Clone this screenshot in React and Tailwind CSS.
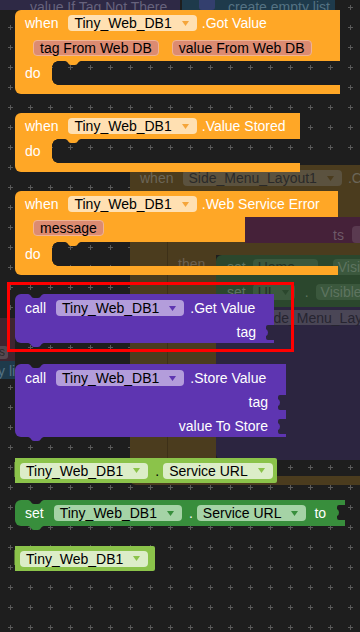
import React from "react";

function Arrow({ color, className = "ml-[10px]" }) {
  return (
    <svg width="7" height="5" viewBox="0 0 7 5" className={`shrink-0 ${className}`}>
      <path d="M0 0H7L3.5 5Z" fill={color} />
    </svg>
  );
}

function Drop({ bg, arrow, children, className = "" }) {
  return (
    <div className={`flex h-[16px] shrink-0 items-center rounded-[4px] pl-[6px] pr-[8px] text-black ${bg} ${className}`}>
      <span>{children}</span>
      <Arrow color={arrow} />
    </div>
  );
}

function Param({ children, className = "" }) {
  return (
    <div className={`flex h-[16px] shrink-0 items-center rounded-[4px] border border-[#f0b394] bg-[#dc8b71] px-[6px] text-black ${className}`}>
      {children}
    </div>
  );
}

// top dip of a statement block (shows the workspace behind)
function Dip({ fill = "#1e1e1e" }) {
  return (
    <svg className="absolute left-[13px] top-0" width="16" height="5" viewBox="0 0 16 5">
      <path d="M0 0C3 0 3 4 6 4H10C13 4 13 0 16 0Z" fill={fill} />
    </svg>
  );
}

function Bump({ fill }) {
  return (
    <svg className="absolute left-[13px] top-full" width="16" height="5" viewBox="0 0 16 5">
      <path d="M0 0C3 0 3 4 6 4H10C13 4 13 0 16 0Z" fill={fill} />
    </svg>
  );
}

function Socket({ fill, className = "" }) {
  return (
    <svg className={`absolute right-0 ${className}`} width="8" height="15" viewBox="0 0 8 15">
      <path d="M8 0H2Q0 0 0 2V4Q2 5 2 7.5Q2 10 0 11V13Q0 15 2 15H8Z" fill={fill} />
    </svg>
  );
}

function Plug({ fill }) {
  return (
    <svg className="absolute left-[-8px] top-[4px]" width="8" height="15" viewBox="0 0 8 15">
      <path d="M8.5 0H3Q1 0 1 2V4Q3 5 3 7.5Q3 10 1 11V13Q1 15 3 15H8.5Z" transform="translate(8 0) scale(-1 1) translate(-8 0)" fill={fill} />
    </svg>
  );
}

function DoRow() {
  return (
    <>
      <div className="flex h-[24px]">
        <div className="flex w-[37px] items-center bg-[#ffa726] pl-[10px]">do</div>
        <div className="relative flex-1">
          <div className="absolute left-0 top-0 h-[6px] w-[6px] bg-[radial-gradient(circle_at_100%_100%,transparent_5.5px,#ffa726_6px)]" />
          <div className="absolute bottom-0 left-0 h-[6px] w-[6px] bg-[radial-gradient(circle_at_100%_0%,transparent_5.5px,#ffa726_6px)]" />
          <svg className="absolute left-[13px] top-0" width="16" height="5" viewBox="0 0 16 5">
            <path d="M0 0C3 0 3 4 6 4H10C13 4 13 0 16 0Z" fill="#ffa726" />
          </svg>
        </div>
      </div>
      <div className="h-[9px] rounded-bl-[6px] bg-[#ffa726]" />
    </>
  );
}

function WhenRow({ event }) {
  return (
    <div className="flex h-[16px] items-center whitespace-nowrap">
      <span>when</span>
      <Drop bg="bg-[#ffe0b2]" arrow="#f5a53a" className="ml-[10px]">
        Tiny_Web_DB1
      </Drop>
      <span className="ml-[5px]">{event}</span>
    </div>
  );
}

function CallBlock({ className = "", method, inputs, socketBg }) {
  return (
    <div className={`relative rounded-l-[6px] bg-[#5e35b1] pb-[3px] pt-[6px] text-white ${className}`}>
      <Dip />
      <Bump fill="#5e35b1" />
      <div className="flex h-[16px] items-center pl-[10px]">
        <span>call</span>
        <Drop bg="bg-[#b39ddb]" arrow="#5e35b1" className="ml-[10px]">
          Tiny_Web_DB1
        </Drop>
        <span className="ml-[6px] whitespace-nowrap">{method}</span>
      </div>
      {inputs.map((name) => (
        <div key={name} className="relative mt-[8px] flex h-[16px] items-center justify-end pr-[18px]">
          {name}
          <Socket fill={socketBg} className="top-[1px]" />
        </div>
      ))}
    </div>
  );
}

function Dim({ className = "", children }) {
  return <div className={`absolute ${className}`}>{children}</div>;
}

export default function App() {
  return (
    <div className="relative h-[632px] w-[360px] overflow-hidden bg-[#1e1e1e] font-['Liberation_Sans',Arial,sans-serif] text-[14px] leading-none">
      {/* workspace grid */}
      <svg className="absolute left-0 top-0" width="360" height="632">
        <defs>
          <pattern id="grid" x="0" y="-3" width="20" height="20" patternUnits="userSpaceOnUse">
            <path d="M8 10.5H13M10.5 8V13" stroke="#5a5a5a" strokeWidth="1" />
          </pattern>
        </defs>
        <rect width="360" height="632" fill="url(#grid)" />
      </svg>

      {/* dimmed workspace blocks behind the flyout */}
      <Dim className="left-0 top-0 h-[10px] w-[180px] bg-[#2e2945]" />
      <Dim className="left-[30px] top-[-1px] whitespace-nowrap leading-[16px] text-[#67637d]">value If Tag Not There</Dim>
      <Dim className="left-[182px] top-0 h-[10px] w-[153px] bg-[#1e3a4b]" />
      <Dim className="left-[199px] top-0 h-[10px] w-[16px] rounded-b-[3px] bg-[#333f6e]" />
      <Dim className="left-[228px] top-[-1px] whitespace-nowrap leading-[16px] text-[#557383]">create empty list</Dim>

      <Dim className="left-0 top-[318px] h-[43px] w-[15px] bg-[#3f2530]" />
      <Dim className="left-[-10px] top-[346px] h-[13px] w-[18px] rounded-[3px] bg-[#574850] pl-[9px] text-[12px] leading-[13px] text-[#2a2a2a]">s</Dim>
      <Dim className="left-0 top-[361px] h-[18px] w-[15px] bg-[#1e3a4b]" />
      <Dim className="left-[-2px] top-[363px] whitespace-nowrap leading-[16px] text-[#557383]">y li</Dim>

      <Dim className="left-[130px] top-[165px] h-[90px] w-[230px] rounded-tl-[6px] bg-[#4b3c1e]" />
      <Dim className="left-[130px] top-[255px] h-[221px] w-[86px] bg-[#4b3c1e]" />
      <Dim className="left-[167px] top-[192px] h-[284px] w-[1px] bg-[#3d3018]" />
      <Dim className="left-[130px] top-[476px] h-[9px] w-[230px] rounded-bl-[6px] bg-[#4b3c1e]" />
      <Dim className="left-[140px] top-[170px] flex h-[16px] items-center whitespace-nowrap text-[#6b6658]">
        when
        <span className="ml-[10px] flex h-[16px] items-center rounded-[4px] bg-[#5b523f] pl-[5px] pr-[8px] text-[#2a2a2a]">
          Side_Menu_Layout1
          <Arrow color="#4b3c1e" />
        </span>
        <span className="ml-[6px]">.C</span>
      </Dim>
      <Dim className="left-[245px] top-[217px] h-[26px] w-[115px] bg-[#452139]" />
      <Dim className="left-[333px] top-[227px] whitespace-nowrap leading-[16px] text-[#6e5a68]">ts</Dim>
      <Dim className="left-[352px] top-[226px] h-[17px] w-[14px] rounded-[4px] bg-[#5a3a50]" />
      <Dim className="left-[178px] top-[256px] leading-[16px] text-[#6b6050]">then</Dim>
      <Dim className="left-[216px] top-[255px] h-[52px] w-[144px] rounded-tl-[6px] bg-[#2b472d]" />
      <Dim className="left-[227px] top-[259px] flex h-[16px] items-center whitespace-nowrap text-[#5e7460]">
        set
        <span className="ml-[7px] flex h-[16px] w-[65px] items-center rounded-[4px] bg-[#3b583d] pl-[5px] text-[#243024]">Home</span>
        <span className="ml-[15px] flex h-[16px] items-center rounded-[4px] bg-[#3b583d] px-[5px] text-[#5e7460]">Visible</span>
      </Dim>
      <Dim className="left-[227px] top-[284px] flex h-[16px] items-center whitespace-nowrap text-[#5e7460]">
        set
        <span className="ml-[7px] flex h-[16px] items-center rounded-[4px] bg-[#3b583d] pl-[5px] pr-[6px] text-[#243024]">
          UI
          <Arrow color="#2b472d" />
        </span>
        <span className="ml-[10px]">.</span>
        <span className="ml-[7px] flex h-[16px] items-center rounded-[4px] bg-[#3b583d] px-[5px] text-[#5e7460]">Visible</span>
      </Dim>
      <Dim className="left-[216px] top-[307px] h-[153px] w-[144px] rounded-bl-[6px] bg-[#2c2540]" />
      <Dim className="left-[256px] top-[310px] flex h-[15px] items-center whitespace-nowrap rounded-[4px] bg-[#4a4656] px-[5px] text-[#262430]">
        Side_Menu_Layout1
      </Dim>

      {/* flyout blocks */}
      <div className="relative flex flex-col items-start pl-[15px] pt-[10px]">
        <div className="relative w-[325px] text-white">
          <div className="rounded-tl-[6px] bg-[#ffa726] py-[5px] pl-[10px]">
            <WhenRow event=".Got Value" />
            <div className="mt-[9px] flex h-[16px] items-center whitespace-nowrap pl-[8px]">
              <Param>tag From Web DB</Param>
              <Param className="ml-[13px]">value From Web DB</Param>
            </div>
          </div>
          <DoRow />
        </div>

        <div className="relative mt-[19px] w-[285px] text-white">
          <div className="rounded-tl-[6px] bg-[#ffa726] py-[5px] pl-[10px]">
            <WhenRow event=".Value Stored" />
          </div>
          <DoRow />
        </div>

        <div className="relative mt-[19px] w-[323px] text-white">
          <div className="rounded-tl-[6px] bg-[#ffa726] py-[5px] pl-[10px]">
            <WhenRow event=".Web Service Error" />
          </div>
          <div className="flex h-[25px] w-[230px] items-start bg-[#ffa726] pl-[18px] pt-[3px] whitespace-nowrap">
            <Param>message</Param>
          </div>
          <DoRow />
        </div>

        <CallBlock className="mt-[19px] w-[259px]" method=".Get Value" inputs={["tag"]} socketBg="#2c2540" />

        <CallBlock className="mt-[21px] w-[271px]" method=".Store Value" inputs={["tag", "value To Store"]} socketBg="#2c2540" />

        {/* getter */}
        <div className="relative mt-[21px] flex h-[25px] w-[262px] items-center rounded-r-[2px] bg-[#8bc34a] pl-[5px] whitespace-nowrap">
          <Plug fill="#8bc34a" />
          <Drop bg="bg-[#dcedc8]" arrow="#8bc34a">
            Tiny_Web_DB1
          </Drop>
          <span className="ml-[7px] text-black">.</span>
          <Drop bg="bg-[#dcedc8]" arrow="#8bc34a" className="ml-[4px]">
            Service URL
          </Drop>
        </div>

        {/* setter */}
        <div className="relative mt-[17px] flex h-[26px] w-[330px] items-center rounded-l-[6px] bg-[#388e3c] pl-[10px] whitespace-nowrap text-white">
          <Dip />
          <Bump fill="#388e3c" />
          <span>set</span>
          <Drop bg="bg-[#a5d3a6]" arrow="#388e3c" className="ml-[10px]">
            Tiny_Web_DB1
          </Drop>
          <span className="ml-[7px]">.</span>
          <Drop bg="bg-[#a5d3a6]" arrow="#388e3c" className="ml-[4px]">
            Service URL
          </Drop>
          <span className="ml-[8px]">to</span>
          <Socket fill="#1e1e1e" className="top-[5px]" />
        </div>

        {/* component block */}
        <div className="relative mt-[20px] flex h-[25px] w-[140px] items-center rounded-r-[2px] bg-[#8bc34a] pl-[5px] whitespace-nowrap">
          <Plug fill="#8bc34a" />
          <Drop bg="bg-[#dcedc8]" arrow="#8bc34a">
            Tiny_Web_DB1
          </Drop>
        </div>
      </div>

      {/* selection highlight */}
      <div className="pointer-events-none absolute left-[7px] top-[282px] h-[70px] w-[287px] border-[3px] border-[#ff0000]" />
    </div>
  );
}
